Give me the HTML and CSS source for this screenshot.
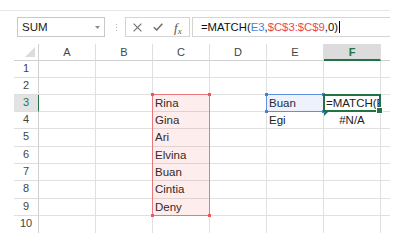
FILE: index.html
```html
<!DOCTYPE html>
<html lang="en">
<head>
    <meta charset="UTF-8">
    <meta name="viewport" content="width=device-width, initial-scale=1.0">
    <title>MATCH</title>
    <link rel="stylesheet" href="styles.css">
</head>
<body>
    <div class="ribbon-edge"></div>

    <div class="formula-bar">
        <div class="name-box">
            <span>SUM</span>
            <svg width="5" height="3" viewBox="0 0 5 3"><path d="M0 0H5L2.5 3Z" fill="#8c8c8c"/></svg>
        </div>
        <div class="grip"><i></i><i></i><i></i></div>
        <div class="fx-tools">
            <svg width="9" height="9" viewBox="0 0 9 9"><path d="M0.6 0.6L8.4 8.4M8.4 0.6L0.6 8.4" stroke="#6e6e6e" stroke-width="1.1"/></svg>
            <svg width="10" height="8" viewBox="0 0 10 8"><path d="M0.8 4.2L3.7 7L9.3 0.8" fill="none" stroke="#6e6e6e" stroke-width="1.5"/></svg>
            <span class="fx">f<span>x</span></span>
        </div>
        <div class="formula-input">=MATCH(<span class="ref-blue">E3</span>,<span class="ref-red">$C$3:$C$9</span>,0)<span class="cursor"></span></div>
    </div>

    <div class="sheet">
        <div class="corner"><span></span></div>
        <div class="col-head">A</div>
        <div class="col-head">B</div>
        <div class="col-head">C</div>
        <div class="col-head">D</div>
        <div class="col-head">E</div>
        <div class="col-head sel">F</div>
        <div class="col-head tail"></div>

        <div class="row-head">1</div>
        <div class="cell"></div><div class="cell"></div><div class="cell"></div><div class="cell"></div><div class="cell"></div><div class="cell"></div><div class="cell tail"></div>

        <div class="row-head">2</div>
        <div class="cell"></div><div class="cell"></div><div class="cell"></div><div class="cell"></div><div class="cell"></div><div class="cell"></div><div class="cell tail"></div>

        <div class="row-head sel">3</div>
        <div class="cell"></div><div class="cell"></div><div class="cell">Rina</div><div class="cell"></div><div class="cell">Buan</div><div class="cell">=MATCH(E</div><div class="cell tail"></div>

        <div class="row-head">4</div>
        <div class="cell"></div><div class="cell"></div><div class="cell">Gina</div><div class="cell"></div><div class="cell">Egi</div><div class="cell err">#N/A</div><div class="cell tail"></div>

        <div class="row-head">5</div>
        <div class="cell"></div><div class="cell"></div><div class="cell">Ari</div><div class="cell"></div><div class="cell"></div><div class="cell"></div><div class="cell tail"></div>

        <div class="row-head">6</div>
        <div class="cell"></div><div class="cell"></div><div class="cell">Elvina</div><div class="cell"></div><div class="cell"></div><div class="cell"></div><div class="cell tail"></div>

        <div class="row-head">7</div>
        <div class="cell"></div><div class="cell"></div><div class="cell">Buan</div><div class="cell"></div><div class="cell"></div><div class="cell"></div><div class="cell tail"></div>

        <div class="row-head">8</div>
        <div class="cell"></div><div class="cell"></div><div class="cell">Cintia</div><div class="cell"></div><div class="cell"></div><div class="cell"></div><div class="cell tail"></div>

        <div class="row-head">9</div>
        <div class="cell"></div><div class="cell"></div><div class="cell">Deny</div><div class="cell"></div><div class="cell"></div><div class="cell"></div><div class="cell tail"></div>

        <div class="row-head end">10</div>
        <div class="cell end"></div><div class="cell end"></div><div class="cell end"></div><div class="cell end"></div><div class="cell end"></div><div class="cell end"></div><div class="cell tail end"></div>

        <!-- selection marks drawn over the grid -->
        <div class="marks">
            <div class="range-red">
                <span class="knob tl"></span><span class="knob tr"></span>
                <span class="knob bl"></span><span class="knob br"></span>
            </div>
            <div class="range-blue">
                <span class="knob tl"></span><span class="knob tr"></span>
                <span class="knob bl"></span><span class="knob br"></span>
            </div>
            <div class="active-cell"></div>
        </div>
    </div>
</body>
</html>
```

FILE: styles.css
```css
* {
    box-sizing: border-box;
}

body {
    margin: 0;
    background: #fff;
    font-family: "Liberation Sans", Arial, sans-serif;
    color: #222;
}

.ribbon-edge {
    width: 390px;
    height: 11px;
    border-bottom: 1px solid #e6e6e6;
}

/* Formula bar */
.formula-bar {
    display: flex;
    width: 373px;
    height: 20px;
    margin: 6px 0 0 17px;
}

.name-box {
    width: 88px;
    border: 1px solid #c8c8c8;
    display: flex;
    align-items: center;
    justify-content: space-between;
    padding: 0 4px 0 4px;
    font-size: 11.5px;
}

.grip {
    display: flex;
    flex-direction: column;
    justify-content: center;
    gap: 2px;
    margin-left: 11px;
    width: 1px;
}

.grip i {
    display: block;
    width: 1px;
    height: 1px;
    background: #b8b8b8;
}

.fx-tools {
    display: flex;
    align-items: center;
    gap: 11px;
    width: 65px;
    margin-left: 8px;
    padding-left: 7px;
    border: 1px solid #d4d4d4;
}

.fx {
    font-family: "Liberation Serif", "Times New Roman", serif;
    font-style: italic;
    font-size: 13px;
    color: #555;
    line-height: 1;
}

.fx span {
    font-size: 9px;
    position: relative;
    top: 2px;
}

.formula-input {
    flex: 1;
    margin-left: 2px;
    padding-left: 8px;
    border: 1px solid #d4d4d4;
    border-right: none;
    font-size: 11.3px;
    line-height: 18px;
    white-space: nowrap;
    color: #111;
}

.ref-blue {
    color: #4a7fd6;
}

.ref-red {
    color: #e8484e;
}

.cursor {
    display: inline-block;
    width: 1px;
    height: 12px;
    margin-left: 1px;
    background: #000;
    vertical-align: -2px;
}

/* Sheet grid */
.sheet,
.marks {
    display: grid;
    grid-template-columns: 25px repeat(6, 57px) 9px;
    grid-template-rows: 17px 17px 17px 17px 17px 18px 17px 17px 18px 17px 17px;
}

.sheet {
    position: relative;
    width: 376px;
    margin: 7px 0 0 14px;
}

.corner {
    display: flex;
    align-items: flex-end;
    justify-content: flex-end;
    padding: 0 3px 3px 0;
    border-right: 1px solid #d0d0d0;
    border-bottom: 1px solid #d0d0d0;
}

.corner span {
    width: 0;
    height: 0;
    border-left: 10px solid transparent;
    border-bottom: 10px solid #dcdcdc;
}

.col-head {
    border-right: 1px solid #dedede;
    border-bottom: 1px solid #d0d0d0;
    text-align: center;
    font-size: 11px;
    line-height: 16px;
    color: #444;
}

.col-head.sel {
    background: #dcdcdc;
    color: #217346;
    font-weight: bold;
    border-bottom: 2px solid #217346;
}

.row-head {
    border-right: 1px solid #d0d0d0;
    border-bottom: 1px solid #dedede;
    text-align: center;
    font-size: 11px;
    line-height: 15px;
    color: #444;
}

.row-head.sel {
    background: #e3e3e3;
    color: #217346;
    border-right-color: #217346;
}

.cell {
    position: relative;
    border-right: 1px solid #e0e0e0;
    border-bottom: 1px solid #e0e0e0;
    padding-left: 2px;
    font-size: 11.5px;
    line-height: 16px;
    white-space: nowrap;
    overflow: hidden;
}

.cell.tail,
.col-head.tail {
    border-right: none;
}

.end {
    border-bottom: none;
}

.cell.err {
    text-align: center;
    padding-left: 0;
}

/* error indicator */
.cell.err::before {
    content: "";
    position: absolute;
    top: 0;
    left: 0;
    border-top: 4px solid #217346;
    border-right: 4px solid transparent;
}

/* Selection marks */
.marks {
    position: absolute;
    top: 0;
    left: 0;
    pointer-events: none;
}

.range-red,
.range-blue,
.active-cell {
    position: relative;
    margin: -1px 0 0 -1px;
}

.range-red {
    grid-column: 4;
    grid-row: 4 / 11;
    border: 1px solid #e8787a;
    background: rgba(238, 90, 90, 0.11);
}

.range-blue {
    grid-column: 6;
    grid-row: 4;
    border: 1px solid #5f90e0;
    background: rgba(80, 130, 225, 0.1);
}

.active-cell {
    grid-column: 7;
    grid-row: 4;
    border: 2px solid #217346;
}

.active-cell::after {
    content: "";
    position: absolute;
    right: -4px;
    bottom: -4px;
    width: 5px;
    height: 5px;
    background: #217346;
    border: 1px solid #fff;
}

.knob {
    position: absolute;
    width: 3px;
    height: 3px;
}

.range-red .knob {
    background: #e8585c;
}

.range-blue .knob {
    background: #4a7fd6;
}

.knob.tl { top: -2px; left: -2px; }
.knob.tr { top: -2px; right: -2px; }
.knob.bl { bottom: -2px; left: -2px; }
.knob.br { bottom: -2px; right: -2px; }
```
